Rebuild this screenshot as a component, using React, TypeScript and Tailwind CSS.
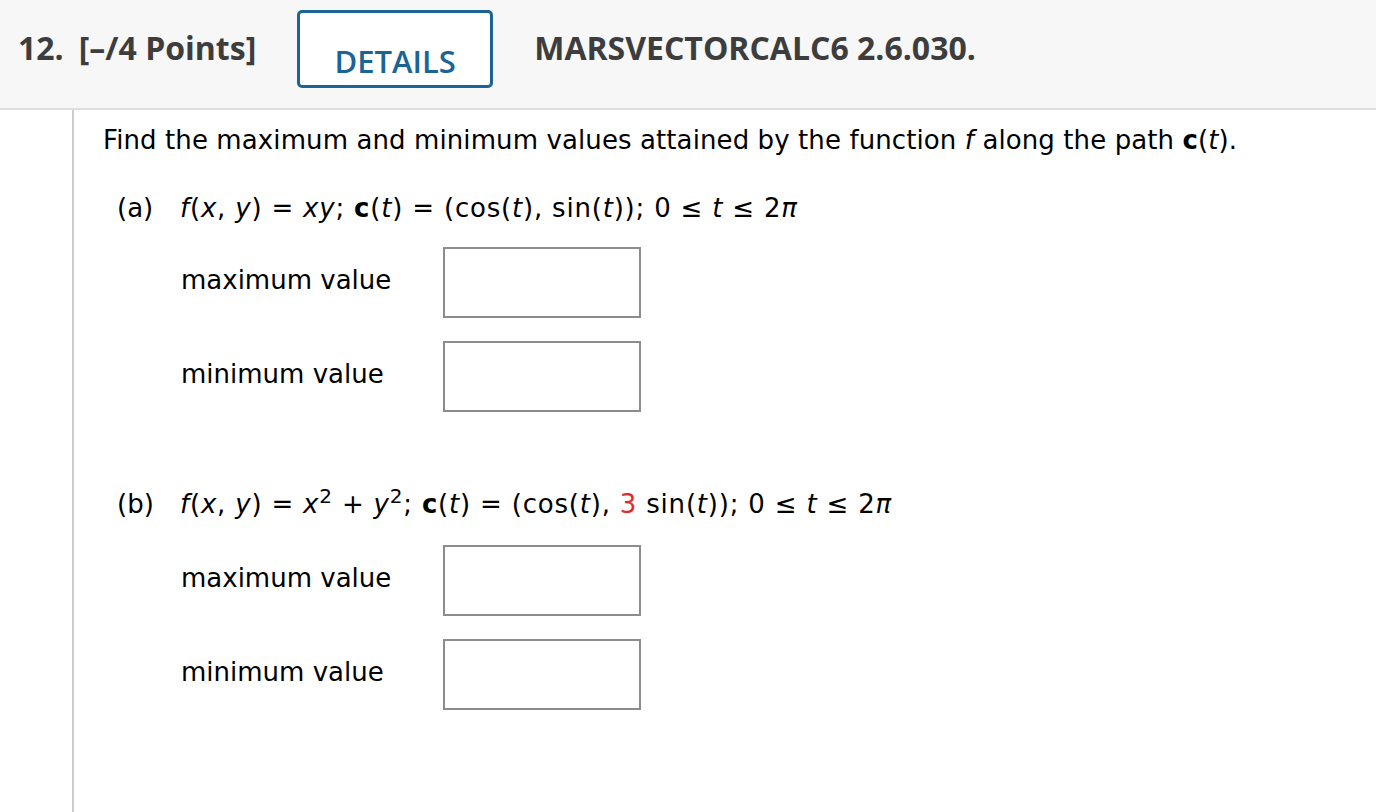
export default function App() {
  const AnswerRow = ({ label }: { label: string }) => (
    <div className="flex items-center h-[71px]">
      <span className="w-[340px] pl-[78px] pb-[5px] whitespace-nowrap">{label}</span>
      <input className="w-[198px] h-[71px] border-2 border-[#8c8c8c] bg-white outline-none" />
    </div>
  );

  return (
    <div className="w-[1376px] h-[812px] bg-white overflow-hidden font-['Open_Sans',sans-serif]">
      {/* Header */}
      <div className="h-[110px] bg-[#f7f7f7] border-b-2 border-[#dedede] flex items-center pb-[12px] pl-[18px] text-[#3d3d3d]">
        <span className="text-[32px] font-bold">12.</span>
        <span className="ml-[15px] text-[32px] font-bold">[–/4 Points]</span>
        <button className="ml-[41px] w-[196px] h-[78px] mt-[2px] border-[3px] border-[#1a6496] rounded-[5px] bg-white flex items-end justify-center pb-[1px] text-[#1a6496] text-[31px] font-semibold">
          DETAILS
        </button>
        <span className="ml-[41px] text-[32px] font-bold">MARSVECTORCALC6 2.6.030.</span>
      </div>

      {/* Question */}
      <div className="flex h-[702px]">
        <div className="ml-[72px] w-[2px] bg-[#cccccc]" />
        <div className="pl-[29px] pt-[12px] text-black text-[26px] font-['DejaVu_Sans',Verdana,sans-serif]">
          <p className="leading-[36px] whitespace-nowrap tracking-[0.1px]">
            Find the maximum and minimum values attained by the function <i>f</i> along the path <b>c</b>(<i>t</i>).
          </p>

          <div className="mt-[32px] flex items-center leading-[36px] pl-[14px] whitespace-nowrap">
            <span className="w-[63px]">(a)</span>
            <span className="tracking-[0.8px]">
              <i>f</i>(<i>x</i>, <i>y</i>) = <i>xy</i>; <b>c</b>(<i>t</i>) = (cos(<i>t</i>), sin(<i>t</i>)); 0 ≤ <i>t</i> ≤ 2<i>π</i>
            </span>
          </div>

          <div className="mt-[21px]">
            <AnswerRow label="maximum value" />
          </div>
          <div className="mt-[23px]">
            <AnswerRow label="minimum value" />
          </div>

          <div className="mt-[74px] flex items-center leading-[36px] pl-[14px] whitespace-nowrap">
            <span className="w-[63px]">(b)</span>
            <span className="tracking-[0.8px]">
              <i>f</i>(<i>x</i>, <i>y</i>) = <i>x</i>
              <sup className="text-[20px]">2</sup> + <i>y</i>
              <sup className="text-[20px]">2</sup>; <b>c</b>(<i>t</i>) = (cos(<i>t</i>), <span className="text-[#e8262b]">3</span> sin(<i>t</i>)); 0 ≤ <i>t</i> ≤ 2<i>π</i>
            </span>
          </div>

          <div className="mt-[23px]">
            <AnswerRow label="maximum value" />
          </div>
          <div className="mt-[23px]">
            <AnswerRow label="minimum value" />
          </div>
        </div>
      </div>
    </div>
  );
}
